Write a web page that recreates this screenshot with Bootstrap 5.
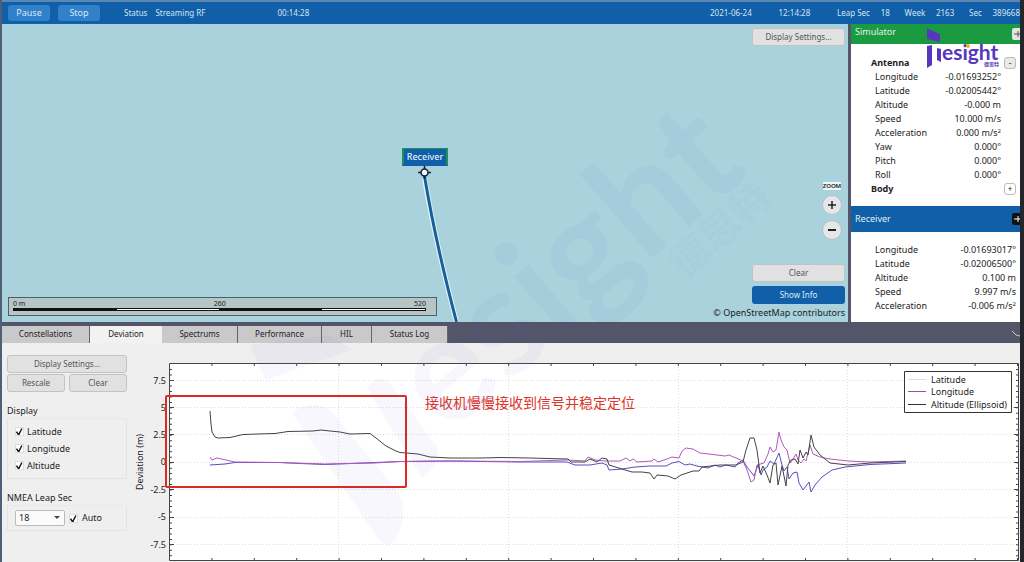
<!DOCTYPE html>
<html lang="en">
<head>
<meta charset="utf-8">
<meta name="viewport" content="width=device-width, initial-scale=1">
<title>Simulator</title>
<link href="https://cdn.jsdelivr.net/npm/bootstrap@5.3.0/dist/css/bootstrap.min.css" rel="stylesheet">
<style>
:root { --blue:#105fa8; --slate:#535568; --panel:#efefef; --ui:"Noto Sans","Noto Sans CJK SC",sans-serif; }
body { font-family:var(--ui); font-size:9px; line-height:14px; color:#222; background:var(--slate); min-height:100vh; }
.frame { min-height:100vh; border-left:2px solid #4f5f75; border-right:4px solid #23272c; }
.topbar { height:24px; background:var(--blue); border-top:2px solid #5b87b1; color:#d3e6f6; font-size:8px; }
.topbar .btn { width:42px; height:16px; background:#3080ca; color:#d8eafa; font-size:9px; }
.topbar .btn:first-child { margin-left:6px; }
.elapsed { padding-left:72px; }
.clock { width:310px; }
.btn { --bs-btn-padding-x:0; --bs-btn-padding-y:0; --bs-btn-border-radius:3px; font-size:8px; line-height:12px; }
.btn-plain { background:#e1e1e1; border:1px solid #c3c3c3; color:#555; height:18px; }
.map { background:#a9d2dc; border-right:3px solid var(--slate); overflow:hidden; }
.map-btns { right:3px; }
.map-btns .btn { height:18px; width:93px; }
.map-btns a { line-height:18px; }
.btn-show { background:var(--blue); color:#dcecf8; }
.zoomer { right:6px; top:158px; width:20px; gap:5px; }
.zoomer .btn { width:20px; height:20px; border-radius:50%; background:#e4e6e8; border:1px solid #b9bfc4; }
.zoom-tag { font-size:6px; line-height:8px; background:#eef6f8; color:#111; font-weight:600; }
.scale { left:6px; bottom:6px; width:429px; height:19px; border:1px solid #4c6065; background:#b6c5c5; font-size:7px; line-height:9px; padding:1px 10px 0 4px; }
.scale-bar { height:3px; border:1px solid #111; background:linear-gradient(90deg,#111 25%,#fff 25% 50%,#111 50% 75%,#fff 75%); }
.route { left:50%; bottom:0; margin-left:-26px; width:70px; height:180px; }
.pin { left:50%; top:124px; margin-left:-23px; width:46px; height:18px; line-height:16px; background:var(--blue); border:2px solid #1c9455; border-top-width:1px; border-bottom-color:var(--blue); color:#e1eef8; font-weight:500; }
.side { width:169px; background:#fff; }
.side-head { color:#e3f2ea; padding-left:4px; }
.head-sim { background:#1b9b41; height:20px; }
.head-sim span { line-height:16px; }
.head-rec { background:var(--blue); height:26px; margin-top:10px; }
.knob { width:8px; height:12px; border-radius:2px 0 0 2px; }
.mini { width:12px; height:12px; background:#e9e9e9; border:1px solid #bbb; line-height:8px; color:#111; }
.grouprow { padding:0 4px 0 20px; height:14px; }
.head-sim + .grouprow { margin-top:12px; }
.readout { width:100%; }
.readout th { font-weight:400; padding:0 0 0 24px; }
.readout td { text-align:right; padding:0 19px 0 0; }
.readout.wide { margin:11px 0 9px; }
.readout.wide td { padding-right:4px; }
.readout sup { font-size:6px; line-height:1px; }
.tabstrip { padding-top:4px; background:var(--slate); height:21px; }
.tabstrip .nav-link { padding:0; height:17px; line-height:16px; font-size:8px; text-align:center; color:#222; background:#c9c9cb; border-radius:0; border-right:1px solid #666; width:76px; }
.tabstrip .nav-link.active { background:#f2f2f3; border-right:0; color:#222; width:72px; }
.tabstrip .w-lg { width:88px; }
.tabstrip .w-md { width:84px; }
.tabstrip .w-sm { width:50px; }
.lower { background:var(--panel); min-height:219px; }
.controls { width:131px; padding:12px 6px 0 5px; }
.pair { margin:1px 0 12px; }
.box { border:1px solid #e3e3e3; border-top-color:#e9e9e9; margin-bottom:12px; padding:4px 7px; }
.tick { appearance:none; width:9px; height:9px; margin:0; border:1px solid #ddd; background:#fff; }
.tick:checked { background:#fff url("data:image/svg+xml,%3Csvg xmlns='http://www.w3.org/2000/svg' viewBox='0 0 8 8'%3E%3Cpath d='M1 4l2 3 3-6' fill='none' stroke='%23111' stroke-width='1.3'/%3E%3C/svg%3E") center/8px no-repeat; }
.checkrow { height:17px; gap:3px; }
.leap { appearance:none; width:50px; height:16px; padding:0 3px; border:1px solid #bbb; border-radius:2px; font-size:9px; line-height:12px; color:#222; background:#fbfbfb url("data:image/svg+xml,%3Csvg xmlns='http://www.w3.org/2000/svg' viewBox='0 0 6 4'%3E%3Cpath d='M0 0h6L3 3z' fill='%23444'/%3E%3C/svg%3E") right 4px center/6px 4px no-repeat; }
.chart { min-width:0; }
.chart text { font-family:var(--ui); }
.logo { right:17px; top:26px; width:78px; height:44px; z-index:5; }
.ghost { inset:0; width:100%; height:100%; z-index:4; pointer-events:none; }
</style>
</head>
<body>
<div class="frame d-flex flex-column position-relative">
  <header class="topbar d-flex align-items-center">
    <button class="btn me-2">Pause</button>
    <button class="btn">Stop</button>
    <span class="ms-4">Status</span><span class="ms-2">Streaming RF</span>
    <span class="elapsed">00:14:28</span>
    <div class="clock ms-auto d-flex justify-content-between">
      <span>2021-06-24</span><span class="ms-3">12:14:28</span><span class="ms-3">Leap Sec</span><span>18</span><span class="ms-1">Week</span><span>2163</span><span class="ms-1">Sec</span><span>389668</span>
    </div>
  </header>

  <div class="d-flex">
    <main class="map flex-grow-1 position-relative">
      <svg class="route position-absolute" viewBox="399 142 70 180" fill="none">
        <path d="M424.500 178Q435 240 456.500 322" stroke="#e8f7fb" stroke-width="5"/>
        <path d="M424.500 176Q435 240 456.500 322" stroke="#185f9c" stroke-width="3"/>
        <path d="M424.500 166v13M418 172.500h13" stroke="#123" stroke-width="1.500"/>
        <circle cx="424.500" cy="172.500" r="3.500" fill="#eef8fa" stroke="#123" stroke-width="1.500"/>
      </svg>
      <div class="pin position-absolute text-center">Receiver</div>
      <div class="map-btns position-absolute top-0 mt-1"><button class="btn btn-plain d-block">Display Settings...</button></div>
      <div class="zoomer position-absolute d-flex flex-column align-items-center">
        <span class="zoom-tag">ZOOM</span>
        <button class="btn d-flex align-items-center justify-content-center" aria-label="Zoom in"><svg width="8" height="8" stroke="#222" stroke-width="1.500"><path d="M0 4h8M4 0v8"/></svg></button>
        <button class="btn d-flex align-items-center justify-content-center" aria-label="Zoom out"><svg width="8" height="8" stroke="#222" stroke-width="2"><path d="M0 4h8"/></svg></button>
      </div>
      <div class="map-btns position-absolute bottom-0 d-flex flex-column align-items-end">
        <button class="btn btn-plain mb-1">Clear</button>
        <button class="btn btn-show">Show Info</button>
        <a class="text-reset text-decoration-none text-nowrap" href="#">© OpenStreetMap contributors</a>
      </div>
      <div class="scale position-absolute">
        <div class="d-flex justify-content-between"><span>0 m</span><span>260</span><span>520</span></div>
        <div class="scale-bar"></div>
      </div>
    </main>

    <aside class="side">
      <div class="side-head head-sim d-flex justify-content-between"><span>Simulator</span>
        <svg class="knob mt-1" viewBox="0 0 8 12"><path fill="#e4e4e4" d="M0 0h8v12H0z"/><path d="M2 6h6M6 3v6" stroke="#555"/></svg></div>
      <div class="grouprow d-flex justify-content-between align-items-center fw-bold">Antenna<button class="btn mini">-</button></div>
      <table class="readout">
        <tr><th>Longitude</th><td>-0.01693252°</td></tr>
        <tr><th>Latitude</th><td>-0.02005442°</td></tr>
        <tr><th>Altitude</th><td>-0.000 m</td></tr>
        <tr><th>Speed</th><td>10.000 m/s</td></tr>
        <tr><th>Acceleration</th><td>0.000 m/s<sup>2</sup></td></tr>
        <tr><th>Yaw</th><td>0.000°</td></tr>
        <tr><th>Pitch</th><td>0.000°</td></tr>
        <tr><th>Roll</th><td>0.000°</td></tr>
      </table>
      <div class="grouprow d-flex justify-content-between align-items-center fw-bold">Body<button class="btn mini bg-white">+</button></div>
      <div class="side-head head-rec d-flex justify-content-between align-items-center"><span>Receiver</span>
        <svg class="knob" viewBox="0 0 8 12"><path fill="#111" d="M0 0h8v12H0z"/><path d="M2 6h6M6 3v6" stroke="#fff"/></svg></div>
      <table class="readout wide">
        <tr><th>Longitude</th><td>-0.01693017°</td></tr>
        <tr><th>Latitude</th><td>-0.02006500°</td></tr>
        <tr><th>Altitude</th><td>0.100 m</td></tr>
        <tr><th>Speed</th><td>9.997 m/s</td></tr>
        <tr><th>Acceleration</th><td>-0.006 m/s<sup>2</sup></td></tr>
      </table>
    </aside>
  </div>

  <nav class="tabstrip nav flex-nowrap">
    <a class="nav-link w-lg" href="#">Constellations</a>
    <a class="nav-link active" href="#">Deviation</a>
    <a class="nav-link" href="#">Spectrums</a>
    <a class="nav-link w-md" href="#">Performance</a>
    <a class="nav-link w-sm" href="#">HIL</a>
    <a class="nav-link" href="#">Status Log</a>
    <svg class="ms-auto mt-1" width="8" height="8" fill="none" stroke="#ccc"><path d="M0 1l4 4 4 1"/></svg>
  </nav>

  <section class="lower d-flex flex-grow-1">
    <form class="controls flex-shrink-0">
      <button type="button" class="btn btn-plain w-100 d-block">Display Settings...</button>
      <div class="pair d-flex gap-1">
        <button type="button" class="btn btn-plain flex-fill w-50">Rescale</button>
        <button type="button" class="btn btn-plain flex-fill w-50">Clear</button>
      </div>
      <div>Display</div>
      <div class="box">
        <div class="checkrow d-flex align-items-center"><input class="tick" type="checkbox" id="lat" checked><label for="lat">Latitude</label></div>
        <div class="checkrow d-flex align-items-center"><input class="tick" type="checkbox" id="lon" checked><label for="lon">Longitude</label></div>
        <div class="checkrow d-flex align-items-center"><input class="tick" type="checkbox" id="alt" checked><label for="alt">Altitude</label></div>
      </div>
      <label for="leap">NMEA Leap Sec</label>
      <div class="box d-flex align-items-center gap-1 mb-0">
        <select class="leap" id="leap"><option>18</option></select>
        <input class="tick" type="checkbox" id="auto" checked><label for="auto">Auto</label>
      </div>
    </form>
    <div class="chart flex-grow-1">
      <svg class="d-block w-100" viewBox="133 343 887 219" role="img" aria-label="Deviation over time">
        <path d="M169.500 363.500H1018.500V560.500H169.500z" fill="#fff" stroke="#444"/>
        <g stroke="#dcdcdc" stroke-dasharray="1 2" fill="none">
          <path d="M170 380.500h848M170 407.500h848M170 434.500h848M170 462.500h848M170 489.500h848M170 517.500h848M170 544.500h848"/>
          <path d="M338.500 364v196M508.500 364v196M678.500 364v196M847.500 364v196"/>
        </g>
        <g stroke="#444" fill="none">
          <path d="M169 365H1019" stroke-width="2" stroke-dasharray="1 41.400"/>
          <path d="M169 559H1019" stroke-width="2" stroke-dasharray="1 41.400"/>
          <path d="M171 369V560M1017 369V560" stroke-width="2" stroke-dasharray="1 4.480"/>
          <path d="M170 380.500h4M170 407.500h4M170 434.500h4M170 462.500h4M170 489.500h4M170 517.500h4M170 544.500h4M1014 407.500h4M1014 434.500h4M1014 462.500h4M1014 489.500h4M1014 517.500h4"/>
        </g>
        <g font-size="9" text-anchor="end" fill="#222">
          <text x="166" y="384">7.5</text><text x="166" y="411">5</text><text x="166" y="438">2.5</text><text x="166" y="465">0</text><text x="166" y="493">-2.5</text><text x="166" y="520">-5</text><text x="166" y="548">-7.5</text>
        </g>
        <text transform="translate(143 462) rotate(-90)" font-size="9" text-anchor="middle" fill="#222">Deviation (m)</text>
        <g fill="none" stroke-linejoin="round">
          <path stroke="#5450c0" d="M210 465L225 464 235 462.500 280 462.500 300 463.500 325 464.500 350 463.500 400 461.500 450 461 520 462 567 462 575 465 590 465 602 463 607 465 609 470 622 469 635 467 650 466 666 466 672 463 679 461.500 685 465 690 464 697 466 708 468 715 465 720 467 726 465 735 467 738 463 743 460 747 467 751 472 754 476 758 465 761 475 763 470 767 467 770 461 774 464 779 453 782 465 784 471 787 467 789 479 793 473 797 472 799 483 803 490 806 486 809 482 811 492 815 485 822 477 832 470 845 467 870 464.500 906 463"/>
          <path stroke="#b556c0" d="M210 457L212 460 217 458 235 462 280 462.500 325 464 375 463 400 461.500 450 461 520 461.500 567 460 585 461 588 457 595 460 605 461 620 461 626 458 630 461 633 459 637 462 652 461 654 459 658 462 667 459 672 457 679 458 682 451 686 448 693 449 700 453 717 455 725 456 729 455 736 458 743 461 747 470 751 482 754 480 757 465 764 463 768 454 770 447 773 452 776 450 779 432 781 440 784 447 787 450 790 463 793 459 796 454 798 460 801 463 804 459 806 461 810 445 813 454 820 457 830 459 848 461 870 462 906 461"/>
          <path stroke="#444" d="M210 411L211 424 212 432 215 437 218 438 230 437.500 243 434.500 258 434 275 433.500 288 431.500 313 431 321 430 330 431 340 432 350 434 370 433.500 376 438 386 446 396 451 400 452.500 418 454 430 457 450 458 482 458 500 457.500 530 458 568 459 571 462 585 462 590 459 597 462 602 458 607 459 609 465 622 469 632 472 642 472 650 473 654 479 657 475 668 476 675 479 681 475 693 471 699 471 702 467 720 465 736 465 743 462 746 450 750 438 754 438 757 450 760 473 763 466 767 475 770 483 773 465 776 463 778 485 782 466 786 486 788 465 791 460 795 459 798 464 800 450 803 458 806 452 808 455 811 435 814 447 820 455 830 463 848 465 870 463 906 461.500"/>
        </g>
        <rect x="166" y="396" width="240" height="91" rx="1" fill="none" stroke="#dc2b24" stroke-width="2"/>
        <text x="425" y="408" font-size="14" fill="#dc3428">接收机慢慢接收到信号并稳定定位</text>
        <path d="M904.500 371.500H1011.500V412.500H904.500z" fill="#fff" stroke="#333"/>
        <path d="M908 379.500h18" stroke="#ddd"/><path d="M908 391.500h18" stroke="#a04aa8"/><path d="M908 404.500h18" stroke="#333"/>
        <g font-size="9" fill="#222"><text x="931" y="383">Latitude</text><text x="931" y="395">Longitude</text><text x="931" y="408">Altitude (Ellipsoid)</text></g>
      </svg>
    </div>
  </section>

  <svg class="logo position-absolute" viewBox="923 26 78 44" role="img" aria-label="德思特">
    <path d="M925 28.500L938 34v8l-13-3zM925 46l5-1v20l-5 3zM935 48l4 1v13l-4-2z" fill="#5737bd"/>
    <g font-family="Lato, sans-serif" font-weight="700" fill="#5737bd"><text x="940" y="60" font-size="21">esight</text><text x="982" y="66" font-size="5" font-family="Noto Sans CJK SC, sans-serif">德思特</text></g>
    <circle cx="966" cy="46" r="2" fill="#efae35"/>
  </svg>
  <svg class="ghost position-absolute" viewBox="2 0 1018 562" aria-hidden="true" fill="#5a5ae0" fill-opacity=".05">
    <path d="M292 413Q310 398 330 410L395 488Q412 510 395 540Q386 550 378 538zM367 388Q380 370 392 386L438 448Q436 470 422 478zM250 345L330 335 352 350 265 380z"/>
    <text transform="translate(447 437) rotate(-41)" font-family="Lato, sans-serif" font-weight="700" font-size="150">esight</text>
    <text transform="translate(684 280) rotate(-41)" font-family="Noto Sans CJK SC, sans-serif" font-weight="700" font-size="40">德思特</text>
  </svg>
</div>
<script src="https://cdn.jsdelivr.net/npm/bootstrap@5.3.0/dist/js/bootstrap.bundle.min.js"></script>
</body>
</html>
